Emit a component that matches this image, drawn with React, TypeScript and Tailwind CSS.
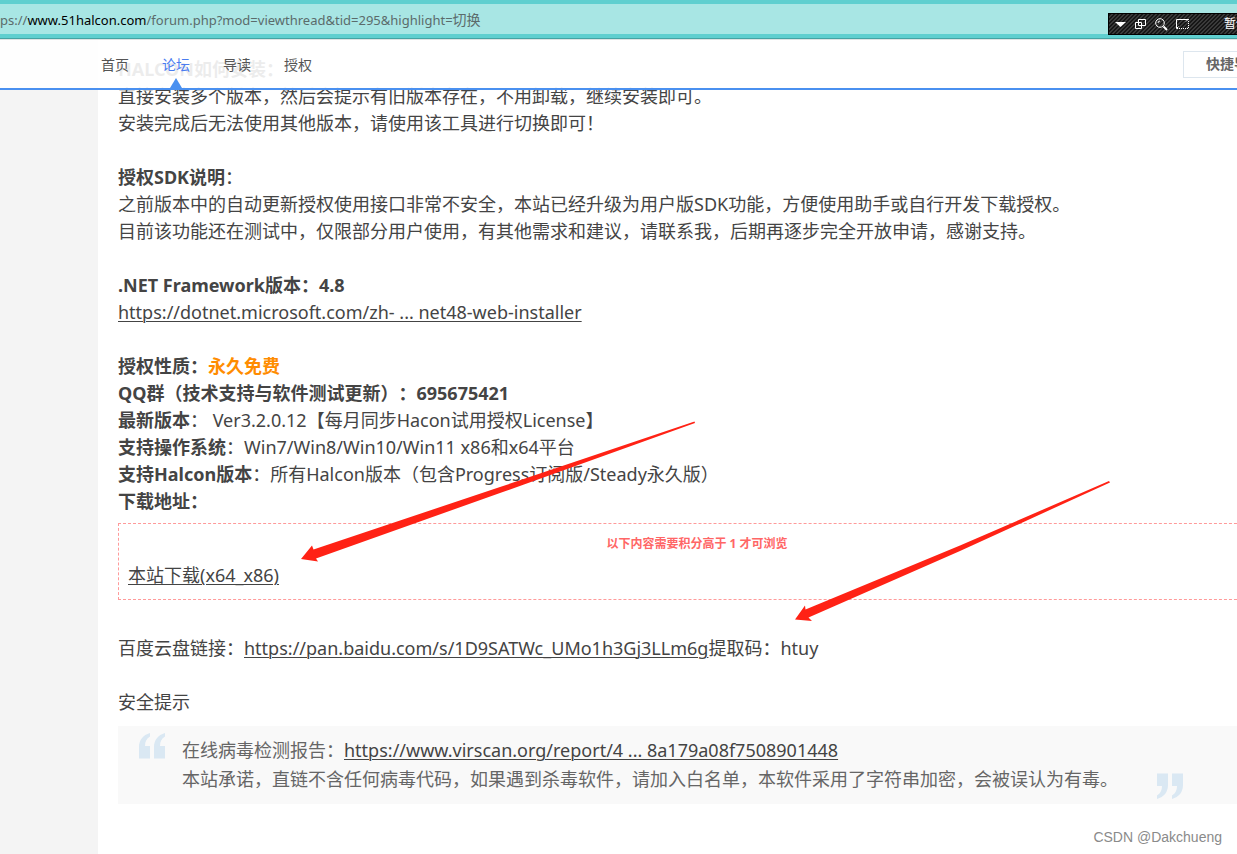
import type { ReactNode } from 'react';

const navItems = [
  { label: '首页', href: '#home' },
  { label: '论坛', href: '#forum', active: true },
  { label: '导读', href: '#guide' },
  { label: '授权', href: '#license' },
];

function AddressBar() {
  return (
    <div className="relative border-b border-[#dfe3e3]">
      <div className="border-b border-[#46a3a3] bg-[#5fcfcf] pt-1 pb-1">
        <div className="h-[30px] overflow-hidden bg-[#a8e6e4] text-[13px] leading-8 whitespace-nowrap text-[#5b6b6b]">
          ps://<span className="text-black">www.51halcon.com</span>
          /forum.php?mod=viewthread&amp;tid=295&amp;highlight=<span className="text-sm leading-none">切换</span>
        </div>
      </div>
      <CaptureToolbar />
    </div>
  );
}

function CaptureToolbar() {
  return (
    <div className="absolute top-[13px] right-0 flex h-[22px] w-[129px] items-center overflow-hidden border border-r-0 border-black bg-[linear-gradient(135deg,#161616_0%,#161616_37%,#3a3a3a_37%,#3a3a3a_50%,#161616_50%,#161616_87%,#3a3a3a_87%)] bg-[length:4px_4px] pl-1.5 text-white">
      <button type="button" aria-label="展开" className="w-5 shrink-0">
        <svg width="11" height="12" viewBox="0 0 11 12" fill="currentColor">
          <path d="M0 4h11L5.5 9z" />
        </svg>
      </button>
      <button type="button" aria-label="窗口" className="w-5 shrink-0">
        <svg width="11" height="12" viewBox="0 0 11 12" fill="none" stroke="currentColor">
          <path d="M3.5 1.5h7v6h-7zM.5 4.5h6v6h-6z" />
        </svg>
      </button>
      <button type="button" aria-label="放大" className="w-[21px] shrink-0">
        <svg width="13" height="13" viewBox="0 0 13 13" fill="none" stroke="currentColor">
          <circle cx="5" cy="5" r="4.3" />
          <path d="M3 5a2 2 0 0 1 2-2" />
          <path d="M8.5 8.5l3.5 3.5" strokeWidth="2" />
        </svg>
      </button>
      <button type="button" aria-label="选区" className="w-[48px] shrink-0">
        <svg width="13" height="12" viewBox="0 0 13 12" fill="none" stroke="currentColor">
          <path d="M.5 10.5v-9h9" />
          <path d="M10 1.5h2.5v9H0" strokeDasharray="1 1" />
          <path d="M9 1.5h3.5M.5 10.5l2-2M10 3.5l2-2" />
        </svg>
      </button>
      <span className="shrink-0 text-xs">暂停</span>
    </div>
  );
}

function SiteHeader() {
  return (
    <header className="absolute inset-x-0 top-0 z-10 flex h-[50px] items-center justify-between overflow-hidden border-b-2 border-[#4a90f0] bg-white/90 pl-[101px]">
      <nav className="flex h-full gap-[33px] text-sm">
        {navItems.map((item) => (
          <a
            key={item.label}
            href={item.href}
            className={
              item.active
                ? 'relative flex items-center pt-0.5 text-[#4a7cf0]'
                : 'flex items-center pt-0.5 text-[#555]'
            }
          >
            {item.label}
            {item.active && (
              <svg className="absolute bottom-0 left-2" width="12" height="10" viewBox="0 0 12 10">
                <path d="M6 0l6 10H0z" fill="#4a90f0" />
              </svg>
            )}
          </a>
        ))}
      </nav>
      <button
        type="button"
        className="-mr-12 h-[27px] border border-[#dde6ee] bg-white px-[22px] text-sm font-bold whitespace-nowrap text-[#666]"
      >
        快捷导航
      </button>
    </header>
  );
}

function TextLink({ href, children }: { href: string; children: ReactNode }) {
  return (
    <a href={href} className="underline decoration-1 underline-offset-2">
      {children}
    </a>
  );
}

function QuoteMark({ className }: { className: string }) {
  return (
    <svg className={className} width="26" height="26" viewBox="0 0 26 26" fill="#dae8f3">
      <path d="M11 0v3.500C7.500 5.500 6 9 6 13h5v12.500H0V14C0 7 4 2 11 0zM26 0v3.500C22.500 5.500 21 9 21 13h5v12.500H15V14C15 7 19 2 26 0z" />
    </svg>
  );
}

function Arrows() {
  return (
    <svg
      className="pointer-events-none absolute top-[380px] left-[300px]"
      width="812"
      height="204"
      viewBox="300 420 812 204"
      fill="#ff2215"
      aria-hidden="true"
    >
      <path d="M694.500 421.500L695 423 500 493 316 558.500 318 561.500 301 559 312 545.500 313.500 549.500 500 487z" />
      <path d="M1109 481L1110 482.500 960 551 808.500 617.500 812 621 795 619.500 805 605.500 805.500 609.500 960 545.500z" />
    </svg>
  );
}

function Post() {
  return (
    <article className="-mr-10 ml-[98px] flex-1 bg-white pt-4 pl-5 text-lg leading-[27px] text-[#444]">
      <p className="font-bold">HALCON如何安装：</p>
      <p>直接安装多个版本，然后会提示有旧版本存在，不用卸载，继续安装即可。</p>
      <p>安装完成后无法使用其他版本，请使用该工具进行切换即可！</p>

      <p className="mt-[27px]">
        <strong>授权SDK说明</strong>：
      </p>
      <p>之前版本中的自动更新授权使用接口非常不安全，本站已经升级为用户版SDK功能，方便使用助手或自行开发下载授权。</p>
      <p>目前该功能还在测试中，仅限部分用户使用，有其他需求和建议，请联系我，后期再逐步完全开放申请，感谢支持。</p>

      <p className="mt-[27px] font-bold">.NET Framework版本：4.8</p>
      <p>
        <TextLink href="#dotnet">https://dotnet.microsoft.com/zh- ... net48-web-installer</TextLink>
      </p>

      <p className="mt-[27px] font-bold">
        授权性质：<span className="text-[#ff8c00]">永久免费</span>
      </p>
      <p className="font-bold">QQ群（技术支持与软件测试更新）：695675421</p>
      <p>
        <strong>最新版本</strong>： Ver3.2.0.12【每月同步Hacon试用授权License】
      </p>
      <p>
        <strong>支持操作系统</strong>：Win7/Win8/Win10/Win11 x86和x64平台
      </p>
      <p>
        <strong>支持Halcon版本</strong>：所有Halcon版本（包含Progress订阅版/Steady永久版）
      </p>
      <p className="font-bold">下载地址：</p>

      <section className="mt-2 border border-dashed border-[#ff9a9a] p-2.5 pl-[9px]">
        <h4 className="text-center text-xs leading-5 font-bold text-[#ff6666]">
          以下内容需要积分高于 1 才可浏览
        </h4>
        <p className="mt-2">
          <TextLink href="#download">本站下载(x64_x86)</TextLink>
        </p>
      </section>

      <p className="mt-[35px]">
        百度云盘链接：
        <TextLink href="#pan">https://pan.baidu.com/s/1D9SATWc_UMo1h3Gj3LLm6g</TextLink>
        提取码：htuy
      </p>
      <p className="mt-[27px]">安全提示</p>

      <blockquote className="relative mt-2.5 bg-[#f9f9f9] py-2.5 pl-16 leading-[29px] text-[#666]">
        <QuoteMark className="absolute top-[7px] left-[21px]" />
        <p>
          在线病毒检测报告：
          <span className="text-[#444]">
            <TextLink href="#virscan">https://www.virscan.org/report/4 ... 8a179a08f7508901448</TextLink>
          </span>
        </p>
        <p>本站承诺，直链不含任何病毒代码，如果遇到杀毒软件，请加入白名单，本软件采用了字符串加密，会被误认为有毒。</p>
        <QuoteMark className="absolute right-[94px] bottom-[5px] rotate-180" />
      </blockquote>
    </article>
  );
}

export default function App() {
  return (
    <div
      lang="zh-CN"
      className="relative flex min-h-screen flex-col overflow-hidden bg-[#f4f4f4] font-['Noto_Sans','Noto_Sans_CJK_SC',sans-serif] [text-spacing-trim:space-all]"
    >
      <AddressBar />
      <main className="relative flex flex-1 flex-col">
        <SiteHeader />
        <Post />
        <Arrows />
      </main>
      <span className="absolute right-[15px] bottom-[7px] font-['Liberation_Sans',sans-serif] text-sm text-[#8a8a8a]">
        CSDN @Dakchueng
      </span>
    </div>
  );
}
